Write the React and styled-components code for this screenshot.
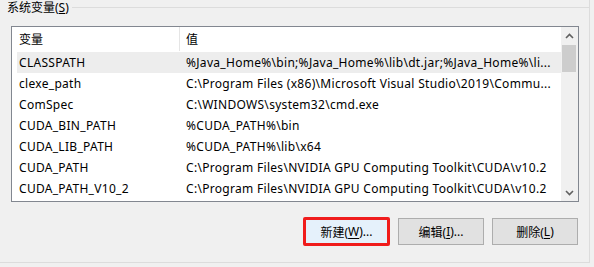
import React from 'react'
import styled, { createGlobalStyle } from 'styled-components'

const GlobalStyle = createGlobalStyle`
  html, body {
    margin: 0;
    padding: 0;
    background: #f0f0f0;
  }
  body {
    font-family: "Noto Sans", "Noto Sans CJK SC", sans-serif;
    font-size: 12px;
    color: #000;
  }
`

const rows = [
  ['CLASSPATH', '%Java_Home%\\bin;%Java_Home%\\lib\\dt.jar;%Java_Home%\\li...'],
  ['clexe_path', 'C:\\Program Files (x86)\\Microsoft Visual Studio\\2019\\Commu...'],
  ['ComSpec', 'C:\\WINDOWS\\system32\\cmd.exe'],
  ['CUDA_BIN_PATH', '%CUDA_PATH%\\bin'],
  ['CUDA_LIB_PATH', '%CUDA_PATH%\\lib\\x64'],
  ['CUDA_PATH', 'C:\\Program Files\\NVIDIA GPU Computing Toolkit\\CUDA\\v10.2'],
  ['CUDA_PATH_V10_2', 'C:\\Program Files\\NVIDIA GPU Computing Toolkit\\CUDA\\v10.2'],
]

export default function App() {
  return (
    <>
      <GlobalStyle />
      <Page>
        <GroupBox>
          <GroupHeader>
            <GroupLabel>系统变量(<u>S</u>)</GroupLabel>
            <GroupLine />
          </GroupHeader>

          <ListBox>
            <ListMain>
              <HeaderRow>
                <HeadCell $first>变量</HeadCell>
                <HeadCell>值</HeadCell>
              </HeaderRow>
              {rows.map(([name, value], i) => (
                <Row key={name} $hot={i === 0}>
                  <NameCell>{name}</NameCell>
                  <ValueCell>{value}</ValueCell>
                </Row>
              ))}
            </ListMain>
            <ScrollBar>
              <ArrowBtn>
                <svg width="9" height="6" viewBox="0 0 9 6">
                  <path d="M1 5 L4.5 1.5 L8 5" fill="none" stroke="#606060" strokeWidth="1.6" />
                </svg>
              </ArrowBtn>
              <Track>
                <Thumb />
              </Track>
              <ArrowBtn>
                <svg width="9" height="6" viewBox="0 0 9 6">
                  <path d="M1 1 L4.5 4.5 L8 1" fill="none" stroke="#606060" strokeWidth="1.6" />
                </svg>
              </ArrowBtn>
            </ScrollBar>
          </ListBox>

          <ButtonRow>
            <Button $focused>新建(<u>W</u>)...</Button>
            <Button>编辑(<u>I</u>)...</Button>
            <Button>删除(<u>L</u>)</Button>
          </ButtonRow>
        </GroupBox>
      </Page>
    </>
  )
}

const Page = styled.div`
  width: 594px;
  height: 267px;
  overflow: hidden;
`

const GroupBox = styled.div`
  width: 589px;
  height: 262px;
  border-right: 1px solid #dcdcdc;
  border-bottom: 1px solid #dcdcdc;
  display: flex;
  flex-direction: column;
`

const GroupHeader = styled.div`
  height: 15px;
  display: flex;
  align-items: center;
`

const GroupLabel = styled.span`
  padding: 0 3px 0 7px;
  line-height: 15px;
  white-space: nowrap;
`

const GroupLine = styled.div`
  flex: 1;
  height: 1px;
  margin-top: -1px;
  background: #dcdcdc;
`

const ListBox = styled.div`
  margin: 11px 0 0 11px;
  width: 566px;
  height: 174px;
  border: 1px solid #828790;
  background: #fff;
  display: flex;
`

const ListMain = styled.div`
  flex: 1;
  min-width: 0;
  overflow: hidden;
`

const HeaderRow = styled.div`
  height: 24px;
  display: flex;
  margin-bottom: 1px;
`

const HeadCell = styled.div`
  display: flex;
  align-items: center;
  padding-left: ${p => (p.$first ? '7px' : '6px')};
  width: ${p => (p.$first ? '168px' : 'auto')};
  flex: ${p => (p.$first ? 'none' : '1')};
  border-right: ${p => (p.$first ? '1px solid #e5e5e5' : 'none')};
  box-sizing: border-box;
`

const Row = styled.div`
  height: 21px;
  margin-left: 5px;
  display: flex;
  align-items: center;
  letter-spacing: 0.3px;
  background: ${p => (p.$hot ? '#ededed' : 'transparent')};
`

const NameCell = styled.div`
  width: 163px;
  padding-left: 2px;
  box-sizing: border-box;
  white-space: nowrap;
`

const ValueCell = styled.div`
  flex: 1;
  min-width: 0;
  padding: 0 6px;
  white-space: nowrap;
`

const ScrollBar = styled.div`
  width: 17px;
  background: #f0f0f0;
  display: flex;
  flex-direction: column;
`

const ArrowBtn = styled.div`
  height: 17px;
  display: flex;
  align-items: center;
  justify-content: center;
`

const Track = styled.div`
  flex: 1;
  padding: 1px 2px 0 1px;
`

const Thumb = styled.div`
  height: 27px;
  background: #cdcdcd;
`

const ButtonRow = styled.div`
  margin: 15px 0 0 0;
  width: 578px;
  display: flex;
  justify-content: flex-end;
  align-items: center;
  gap: 8px;
`

const Button = styled.button`
  font: inherit;
  color: #000;
  width: ${p => (p.$focused ? '87px' : '86px')};
  height: ${p => (p.$focused ? '29px' : '27px')};
  padding: 0;
  border: ${p => (p.$focused ? '3px solid #f01c1c' : '1px solid #adadad')};
  border-radius: ${p => (p.$focused ? '2px' : '0')};
  background: ${p => (p.$focused ? '#e5f1fb' : '#e1e1e1')};
  display: flex;
  align-items: center;
  justify-content: center;
  u {
    text-underline-offset: 2px;
  }
`
